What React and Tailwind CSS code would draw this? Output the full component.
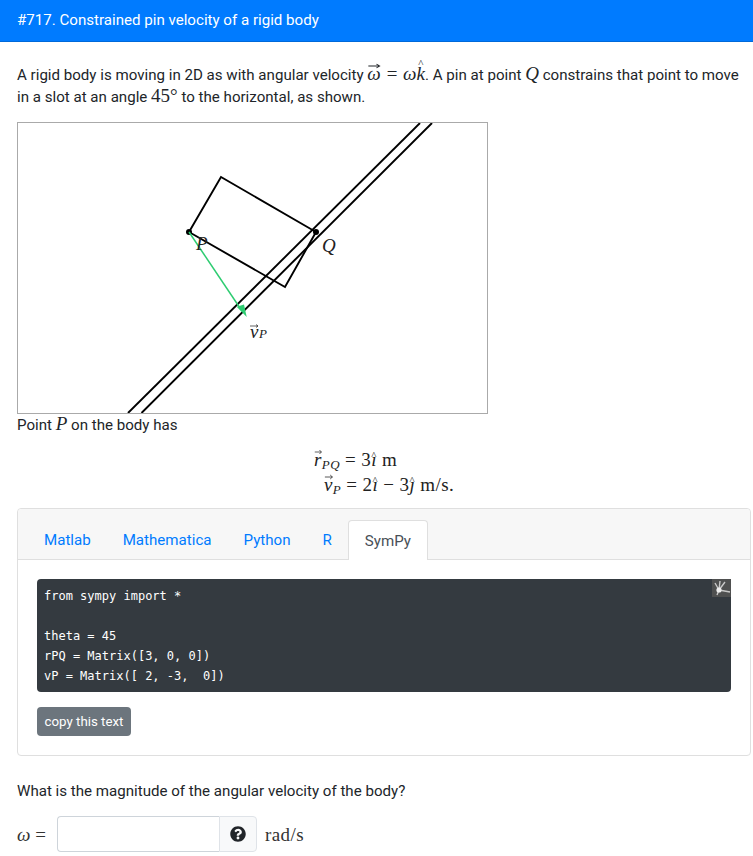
import React from 'react';

const sans = { fontFamily: 'Roboto, sans-serif' };

const Vec = ({ children }) => (
    <span className="relative inline-block leading-none">
        {children}
        <svg className="absolute left-0 -top-[1px] w-full h-[6px]" viewBox="0 0 10 6" preserveAspectRatio="none">
            <path d="M1 3H9.500M7 1L9.500 3L7 5" fill="none" stroke="currentColor" strokeWidth="0.8" />
        </svg>
    </span>
);

// tall letters need the hat further up
const Hat = ({ children, tall }) => (
    <span className="relative inline-block leading-none">
        {children}
        <span className={`absolute left-0 right-0 text-center text-[11px] leading-none not-italic ${tall ? '-top-[6px]' : 'top-0'}`}>^</span>
    </span>
);

const M = ({ children, className = '' }) => (
    <span className={`font-['Liberation_Serif',serif] text-[19px] leading-none ${className}`}>{children}</span>
);

const Diagram = () => (
    <svg className="block" width="469" height="290" viewBox="18 123 469 290">
        <g fill="none" stroke="#000" strokeWidth="1.900">
            <path d="M128 413L420 123" />
            <path d="M141.500 413L432 123" />
            <path d="M189 232L221 177L316 232L285 287Z" />
        </g>
        <circle cx="189" cy="232" r="3" fill="#000" />
        <circle cx="316" cy="232" r="3" fill="#000" />
        <path d="M189 232L242 311" stroke="#2ecc71" strokeWidth="1.500" fill="none" />
        <path d="M246.700 317L236.700 306.700L244 304.500Z" fill="#2ecc71" />
        <g fontFamily="Liberation Serif" fontStyle="italic" fontSize="19" fill="#222">
            <text x="196" y="250">P</text>
            <text x="322" y="252">Q</text>
            <text x="250" y="338">v</text>
            <text x="259" y="338" fontSize="13">P</text>
        </g>
        <path d="M250 326H258M256 324.500L258 326L256 327.500" fill="none" stroke="#222" strokeWidth="0.7" />
    </svg>
);

const tabs = ['Matlab', 'Mathematica', 'Python', 'R'];

const code = `from sympy import *

theta = 45
rPQ = Matrix([3, 0, 0])
vP = Matrix([ 2, -3,  0])`;

export default function App() {
    return (
        <div className="bg-white text-[#212529] text-[15.1px] leading-[22px]" style={sans}>
            <div className="bg-[#007bff] text-white h-[42px] pb-[2px] flex items-center pl-[17px] border-b border-[#0069d9]">
                #717. Constrained pin velocity of a rigid body
            </div>

            <div className="pl-[17px] pr-[2px] pt-[22px]">
                <p className="pr-[12px]">
                    A rigid body is moving in 2D as with angular velocity{' '}
                    <M className="italic"><Vec>ω</Vec> = ω<Hat tall>k</Hat></M>. A pin at point <M className="italic">Q</M> constrains that point to move in a slot at an angle{' '}
                    <M>45°</M> to the horizontal, as shown.
                </p>

                <div className="mt-[14px] w-[471px] border border-[#aaaaaa]">
                    <Diagram />
                </div>

                <p>Point <M className="italic">P</M> on the body has</p>

                <div className="mt-[11px] h-[50px] pl-[297px] font-['Liberation_Serif',serif] text-[19px] leading-[25px] tracking-[0.4px] text-[#222]">
                    <div>
                        <span className="italic"><Vec>r</Vec><span className="text-[13px] align-[-3px] leading-none">PQ</span></span> = 3<span className="italic"><Hat>ı</Hat></span> m
                    </div>
                    <div className="pl-[10px]">
                        <span className="italic"><Vec>v</Vec><span className="text-[13px] align-[-3px] leading-none">P</span></span> = 2<span className="italic"><Hat>ı</Hat></span> − 3<span className="italic"><Hat>ȷ</Hat></span> m/s.
                    </div>
                </div>

                <div className="mt-[11px] border border-[#dfdfdf] rounded-[4px] h-[248px]">
                    <div className="h-[51px] bg-[#f7f7f7] border-b border-[#dfdfdf] rounded-t-[4px] flex items-end pl-[10px]">
                        {tabs.map((t) => (
                            <span key={t} className="h-[39px] px-[16px] flex items-center text-[#007bff]">{t}</span>
                        ))}
                        <span className="h-[40px] -mb-px px-[16px] flex items-center bg-white border border-b-0 border-[#dfdfdf] rounded-t-[4px] text-[#495057]">SymPy</span>
                    </div>

                    <div className="px-[19px] pt-[19px]">
                        <div className="relative h-[113px] bg-[#343a40] rounded-[4px]">
                            <pre className="pl-[7px] pt-[7px] font-['DejaVu_Sans_Mono',monospace] text-[12px] leading-[20px] text-white h-full">{code}</pre>
                            <svg className="absolute top-0 right-0" width="19" height="18" viewBox="0 0 19 18">
                                <rect width="19" height="18" fill="#4f5050" />
                                <path d="M7 11L3 4M7 11L8 2M7 11L13 3M7 11L18 13M7 11L5 16" stroke="#c8c8c8" strokeWidth="1.400" fill="none" />
                                <circle cx="7" cy="11" r="2.600" fill="#eeeeee" />
                            </svg>
                        </div>
                        <button className="mt-[15px] h-[29px] w-[94px] bg-[#6c757d] text-white rounded-[4px] text-[13.300px] leading-none">copy this text</button>
                    </div>
                </div>

                <p className="mt-[24px]">What is the magnitude of the angular velocity of the body?</p>

                <div className="mt-[14px] flex items-center">
                    <M className="italic w-[40px] text-[#333]">ω <span className="not-italic">=</span></M>
                    <input className="w-[162px] h-[36px] border border-[#ced4da] border-r-0 rounded-l-[4px] bg-white" />
                    <span className="w-[38px] h-[36px] border border-[#dfe3e8] rounded-r-[4px] bg-[#f8f9fa] flex items-center justify-center">
                        <svg width="16" height="16" viewBox="0 0 512 512">
                            <path fill="#212529" d="M504 256c0 137-111 248-248 248S8 393 8 256 119 8 256 8s248 111 248 248zM262.700 90c-54.500 0-89.300 23-116.500 63.800-3.500 5.300-2.400 12.400 2.700 16.300l34.700 26.300c5.200 3.900 12.600 3 16.700-2.100 17.900-22.700 30.100-35.800 57.300-35.800 20.400 0 45.700 13.100 45.700 32.900 0 15-12.400 22.700-32.600 34-23.600 13.200-54.800 29.700-54.800 70.900V300c0 6.600 5.400 12 12 12h56c6.600 0 12-5.400 12-12v-1.300c0-28.500 83.400-29.700 83.400-106.800 0-58-60.200-101.900-116.600-101.900zM256 338c-25.400 0-46 20.600-46 46 0 25.400 20.600 46 46 46s46-20.600 46-46c0-25.400-20.600-46-46-46z" />
                        </svg>
                    </span>
                    <M className="ml-[8px] text-[#333] tracking-[0.4px]">rad/s</M>
                </div>
            </div>
        </div>
    );
}
